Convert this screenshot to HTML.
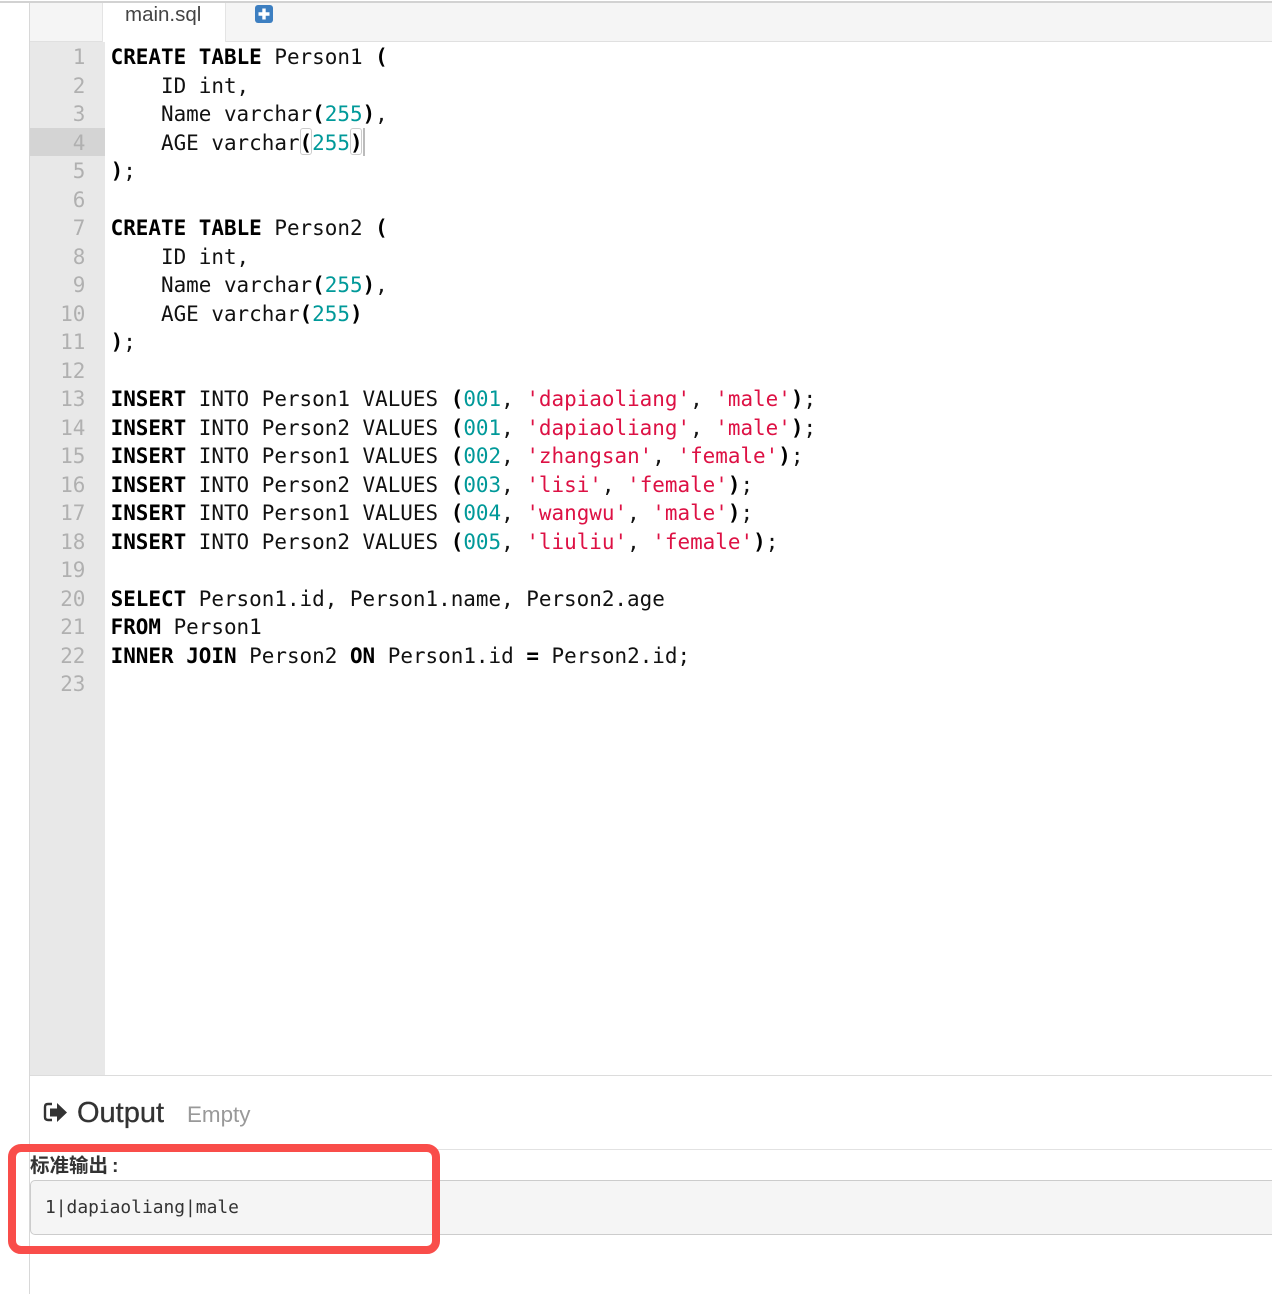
<!DOCTYPE html>
<html><head><meta charset="utf-8">
<style>
html,body{margin:0;padding:0;background:#fff}
body{position:relative;width:1272px;height:1294px;overflow:hidden;font-family:"Liberation Sans",sans-serif}
.a{position:absolute}
#code,#nums{position:absolute;top:43px;font:20.93px/28.5px "DejaVu Sans Mono",monospace;white-space:pre;color:#111}
#code{left:110.6px}
#nums{left:29.4px;width:56px;text-align:right;color:#b0b0b0}
b{font-weight:bold;color:#000}
i{font-style:normal;color:#099}
u{text-decoration:none;color:#d14}
</style></head><body>
<div class="a" style="left:0;top:1px;width:1272px;height:2px;background:#d2d2d2"></div>
<div class="a" style="left:29px;top:3px;width:1px;height:1291px;background:#d8d8d8"></div>
<div class="a" style="left:30px;top:3px;width:1242px;height:38px;background:#f5f5f5"></div>
<div class="a" style="left:30px;top:41px;width:1242px;height:1px;background:#e0e0e0"></div>
<div class="a" style="left:102px;top:3px;width:124px;height:39px;background:#fff;border-left:1px solid #e4e4e4;border-right:1px solid #e4e4e4;box-sizing:border-box"></div>
<div class="a" style="left:125px;top:3px;font-size:20.5px;line-height:24px;color:#444">main.sql</div>
<svg class="a" style="left:254px;top:5px" width="20" height="19" viewBox="0 0 20 19"><rect x="1" y="0" width="18" height="18" rx="3" fill="#3d7fc1"/><path d="M10 3.500v11M4.500 9h11" stroke="#fff" stroke-width="3.400"/></svg>
<div class="a" style="left:30px;top:42px;width:75px;height:1033px;background:#e8e8e8"></div>
<div class="a" style="left:30px;top:128px;width:75px;height:28px;background:#d4d4d4"></div>
<div class="a" style="left:30px;top:1075px;width:1242px;height:1px;background:#dcdcdc"></div>
<div class="a" style="left:300px;top:128px;width:12px;height:27px;border:1px solid #ccc;border-radius:3px;box-sizing:border-box"></div>
<div class="a" style="left:350px;top:128px;width:12px;height:27px;border:1px solid #ccc;border-radius:3px;box-sizing:border-box"></div>
<div class="a" style="left:363px;top:128px;width:2px;height:28px;background:#bbb"></div>
<div id="nums">1
2
3
4
5
6
7
8
9
10
11
12
13
14
15
16
17
18
19
20
21
22
23</div>
<div id="code"><b>CREATE</b> <b>TABLE</b> Person1 <b>(</b>
    ID int,
    Name varchar<b>(</b><i>255</i><b>)</b>,
    AGE varchar<b>(</b><i>255</i><b>)</b>
<b>)</b>;

<b>CREATE</b> <b>TABLE</b> Person2 <b>(</b>
    ID int,
    Name varchar<b>(</b><i>255</i><b>)</b>,
    AGE varchar<b>(</b><i>255</i><b>)</b>
<b>)</b>;

<b>INSERT</b> INTO Person1 VALUES <b>(</b><i>001</i>, <u>'dapiaoliang'</u>, <u>'male'</u><b>)</b>;
<b>INSERT</b> INTO Person2 VALUES <b>(</b><i>001</i>, <u>'dapiaoliang'</u>, <u>'male'</u><b>)</b>;
<b>INSERT</b> INTO Person1 VALUES <b>(</b><i>002</i>, <u>'zhangsan'</u>, <u>'female'</u><b>)</b>;
<b>INSERT</b> INTO Person2 VALUES <b>(</b><i>003</i>, <u>'lisi'</u>, <u>'female'</u><b>)</b>;
<b>INSERT</b> INTO Person1 VALUES <b>(</b><i>004</i>, <u>'wangwu'</u>, <u>'male'</u><b>)</b>;
<b>INSERT</b> INTO Person2 VALUES <b>(</b><i>005</i>, <u>'liuliu'</u>, <u>'female'</u><b>)</b>;

<b>SELECT</b> Person1.id, Person1.name, Person2.age
<b>FROM</b> Person1
<b>INNER</b> <b>JOIN</b> Person2 <b>ON</b> Person1.id <b>=</b> Person2.id;
</div>
<svg class="a" style="left:43px;top:1101px" width="25" height="23" viewBox="0 0 25 23"><path d="M9 3H5Q2 3 2 6v10q0 3 3 3h4" fill="none" stroke="#333" stroke-width="2.400"/><path d="M7 7.500h7V2L24 11.500 14 21v-5.500H7z" fill="#333"/></svg>
<div class="a" style="left:77px;top:1096px;font-size:29px;line-height:34px;color:#333;-webkit-text-stroke:.3px #333">Output</div>
<div class="a" style="left:187px;top:1101px;font-size:22.400px;line-height:27px;color:#999">Empty</div>
<div class="a" style="left:30px;top:1149px;width:1242px;height:1px;background:#e2e2e2"></div>
<div class="a" style="left:30px;top:1154px;font:bold 19.500px/24px 'Liberation Sans','Noto Sans CJK SC',sans-serif;color:#333;white-space:pre">标准输出<span style="margin-left:4px">:</span></div>
<div class="a" style="left:30px;top:1180px;width:1260px;height:55px;box-sizing:border-box;background:#f5f5f5;border:1px solid #ccc;border-radius:5px"></div>
<div class="a" style="left:45px;top:1195px;font:17.900px/25px 'DejaVu Sans Mono',monospace;color:#333;white-space:pre">1|dapiaoliang|male</div>
<div class="a" style="left:8px;top:1144px;width:432px;height:110px;box-sizing:border-box;border:8px solid #f94d4a;border-radius:13px"></div>
</body></html>
